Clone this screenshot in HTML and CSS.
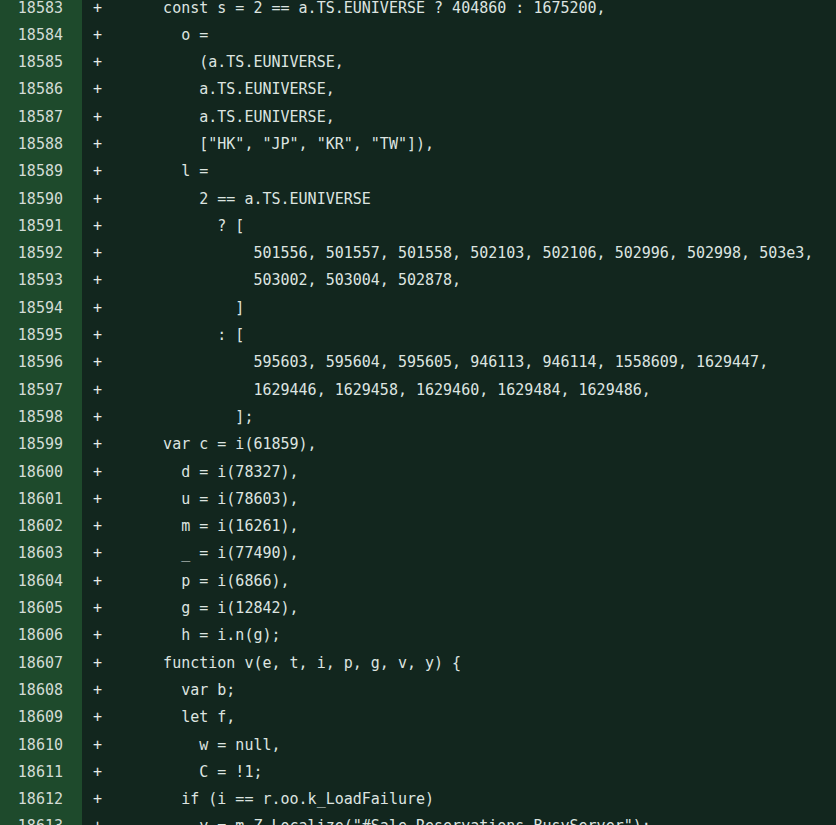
FILE: index.html
```html
<!DOCTYPE html>
<html>
<head>
<meta charset="utf-8">
<link rel="stylesheet" href="styles.css">
</head>
<body>
<div class="diff">
<div class="row"><span class="num">18583</span><span class="mark">+</span><span class="code">    const s = 2 == a.TS.EUNIVERSE ? 404860 : 1675200,</span></div>
<div class="row"><span class="num">18584</span><span class="mark">+</span><span class="code">      o =</span></div>
<div class="row"><span class="num">18585</span><span class="mark">+</span><span class="code">        (a.TS.EUNIVERSE,</span></div>
<div class="row"><span class="num">18586</span><span class="mark">+</span><span class="code">        a.TS.EUNIVERSE,</span></div>
<div class="row"><span class="num">18587</span><span class="mark">+</span><span class="code">        a.TS.EUNIVERSE,</span></div>
<div class="row"><span class="num">18588</span><span class="mark">+</span><span class="code">        ["HK", "JP", "KR", "TW"]),</span></div>
<div class="row"><span class="num">18589</span><span class="mark">+</span><span class="code">      l =</span></div>
<div class="row"><span class="num">18590</span><span class="mark">+</span><span class="code">        2 == a.TS.EUNIVERSE</span></div>
<div class="row"><span class="num">18591</span><span class="mark">+</span><span class="code">          ? [</span></div>
<div class="row"><span class="num">18592</span><span class="mark">+</span><span class="code">              501556, 501557, 501558, 502103, 502106, 502996, 502998, 503e3,</span></div>
<div class="row"><span class="num">18593</span><span class="mark">+</span><span class="code">              503002, 503004, 502878,</span></div>
<div class="row"><span class="num">18594</span><span class="mark">+</span><span class="code">            ]</span></div>
<div class="row"><span class="num">18595</span><span class="mark">+</span><span class="code">          : [</span></div>
<div class="row"><span class="num">18596</span><span class="mark">+</span><span class="code">              595603, 595604, 595605, 946113, 946114, 1558609, 1629447,</span></div>
<div class="row"><span class="num">18597</span><span class="mark">+</span><span class="code">              1629446, 1629458, 1629460, 1629484, 1629486,</span></div>
<div class="row"><span class="num">18598</span><span class="mark">+</span><span class="code">            ];</span></div>
<div class="row"><span class="num">18599</span><span class="mark">+</span><span class="code">    var c = i(61859),</span></div>
<div class="row"><span class="num">18600</span><span class="mark">+</span><span class="code">      d = i(78327),</span></div>
<div class="row"><span class="num">18601</span><span class="mark">+</span><span class="code">      u = i(78603),</span></div>
<div class="row"><span class="num">18602</span><span class="mark">+</span><span class="code">      m = i(16261),</span></div>
<div class="row"><span class="num">18603</span><span class="mark">+</span><span class="code">      _ = i(77490),</span></div>
<div class="row"><span class="num">18604</span><span class="mark">+</span><span class="code">      p = i(6866),</span></div>
<div class="row"><span class="num">18605</span><span class="mark">+</span><span class="code">      g = i(12842),</span></div>
<div class="row"><span class="num">18606</span><span class="mark">+</span><span class="code">      h = i.n(g);</span></div>
<div class="row"><span class="num">18607</span><span class="mark">+</span><span class="code">    function v(e, t, i, p, g, v, y) {</span></div>
<div class="row"><span class="num">18608</span><span class="mark">+</span><span class="code">      var b;</span></div>
<div class="row"><span class="num">18609</span><span class="mark">+</span><span class="code">      let f,</span></div>
<div class="row"><span class="num">18610</span><span class="mark">+</span><span class="code">        w = null,</span></div>
<div class="row"><span class="num">18611</span><span class="mark">+</span><span class="code">        C = !1;</span></div>
<div class="row"><span class="num">18612</span><span class="mark">+</span><span class="code">      if (i == r.oo.k_LoadFailure)</span></div>
<div class="row"><span class="num">18613</span><span class="mark">+</span><span class="code">        y = m.Z.Localize("#Sale_Reservations_BusyServer");</span></div>
</div>
</body>
</html>
```
FILE: styles.css
```css
html, body {
  margin: 0;
  padding: 0;
  background: #12261e;
  overflow: hidden;
}
.diff {
  margin-top: -5.5px;
  font-family: "DejaVu Sans Mono", "Liberation Mono", monospace;
  font-size: 15px;
  color: #dde4e0;
}
.row {
  display: flex;
  height: 27.3px;
  line-height: 27.3px;
  white-space: pre;
}
.num {
  flex: 0 0 82px;
  box-sizing: border-box;
  padding-right: 19px;
  text-align: right;
  background: #1e4a2c;
  color: #d3dcd6;
}
.mark {
  flex: 0 0 45px;
  box-sizing: border-box;
  padding-left: 11px;
  color: #e6ece8;
}
.code {
  flex: 1;
}
```
